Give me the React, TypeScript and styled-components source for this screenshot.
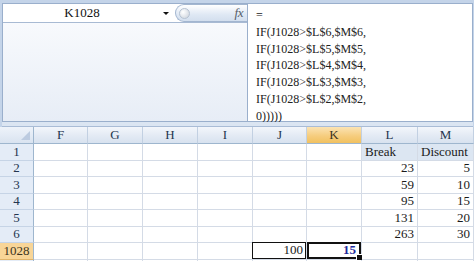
import React from "react";
import styled, { createGlobalStyle, css } from "styled-components";

const GlobalStyle = createGlobalStyle`
  html, body {
    margin: 0;
    padding: 0;
    background: #c4d4e9;
  }
  * {
    box-sizing: border-box;
  }
`;

const Window = styled.div`
  width: 474px;
  height: 261px;
  overflow: hidden;
  display: flex;
  flex-direction: column;
  padding-top: 3px;
  font-family: "Liberation Serif", serif;
`;

const FormulaBar = styled.div`
  display: flex;
  height: 119px;
  margin-left: 2px;
  margin-right: 1px;
`;

const LeftPane = styled.div`
  width: 245px;
  display: flex;
  flex-direction: column;
  border: 1px solid #9aafcc;
  border-right: none;
  background: linear-gradient(#fbfcfe, #e7edf6);
`;

const NameRow = styled.div`
  height: 19px;
  display: flex;
  align-items: stretch;
  border-bottom: 1px solid #a8bad3;
  background: #ffffff;
`;

const NameBox = styled.div`
  flex: 1;
  position: relative;
  display: flex;
  align-items: center;
  justify-content: center;
  font-family: "Liberation Serif", serif;
  font-size: 13px;
  color: #111;
  padding-right: 14px;
`;

const DropArrow = styled.span`
  position: absolute;
  right: 6px;
  top: 8px;
  width: 0;
  height: 0;
  border-left: 3px solid transparent;
  border-right: 3px solid transparent;
  border-top: 3px solid #111;
`;

const FxPill = styled.div`
  width: 72px;
  display: flex;
  align-items: center;
  justify-content: space-between;
  padding: 0 4px 0 3px;
  border: 1px solid #a3b6d0;
  border-right: none;
  border-radius: 10px 0 0 10px;
  background: linear-gradient(#ffffff, #dfe8f4 60%, #d3dfee);
`;

const Knob = styled.span`
  width: 11px;
  height: 11px;
  border-radius: 50%;
  border: 1px solid #b6c2d2;
  background: radial-gradient(circle at 35% 35%, #ffffff, #c9d0da);
`;

const FxLabel = styled.span`
  font-family: "Liberation Serif", serif;
  font-style: italic;
  font-size: 13px;
  color: #555d69;
  letter-spacing: -0.5px;
`;

const FormulaText = styled.div`
  flex: 1;
  background: #ffffff;
  border: 1px solid #9aafcc;
  padding: 3px 0 0 8px;
  font-family: "Liberation Serif", serif;
  font-size: 12px;
  line-height: 16.8px;
  color: #222;
  white-space: pre;
`;

const Strip = styled.div`
  height: 5px;
  margin: 0 1px 0 2px;
  background: #dbe5f2;
  border-bottom: 1px solid #a9bcd6;
`;

const Sheet = styled.div`
  flex: 1;
  display: grid;
  grid-template-columns: 34px 54px 55px 55px 55px 54px 55px 56px 56px;
  grid-template-rows: 17px;
  grid-auto-rows: 16.5px;
  background: #ffffff;
  overflow: hidden;
  font-family: "Liberation Serif", serif;
`;

const ColHeader = styled.div<{ $active?: boolean }>`
  display: flex;
  align-items: center;
  justify-content: center;
  font-size: 13px;
  color: ${(p) => (p.$active ? "#3c3420" : "#24364f")};
  background: ${(p) =>
    p.$active
      ? "linear-gradient(#fbe3b4, #f6cd7f 55%, #f1c15f)"
      : "linear-gradient(#f3f6fb, #e3eaf4 55%, #d8e2ef)"};
  border-right: 1px solid #c2d0e2;
  border-bottom: 1px solid #9eb6ce;
`;

const Corner = styled.div`
  position: relative;
  background: linear-gradient(#eef3fa, #d9e3f0);
  border-right: 1px solid #9eb6ce;
  border-bottom: 1px solid #9eb6ce;

  &::after {
    content: "";
    position: absolute;
    right: 3px;
    bottom: 3px;
    width: 0;
    height: 0;
    border-left: 9px solid transparent;
    border-bottom: 9px solid #bccbe0;
  }
`;

const RowHeader = styled.div<{ $active?: boolean }>`
  display: flex;
  align-items: center;
  justify-content: center;
  font-size: 13px;
  color: ${(p) => (p.$active ? "#3c3420" : "#24364f")};
  background: ${(p) => (p.$active ? "#f8d597" : "#e4ecf7")};
  border-right: 1px solid #9eb6ce;
  border-bottom: 1px solid ${(p) => (p.$active ? "#e0b46a" : "#c6d4e6")};
`;

type Mark = "plain" | "boxed" | "selected";

const Cell = styled.div<{
  $align?: "left" | "right";
  $fill?: string;
  $mark?: Mark;
  $bold?: boolean;
}>`
  position: relative;
  display: flex;
  align-items: center;
  justify-content: ${(p) => (p.$align === "right" ? "flex-end" : "flex-start")};
  padding: 0 3px;
  font-size: 13px;
  color: ${(p) => (p.$bold ? "#1c2a9c" : "#1a1a1a")};
  font-weight: ${(p) => (p.$bold ? 700 : 400)};
  background: ${(p) => p.$fill || "#ffffff"};
  border-right: 1px solid #d4dbe6;
  border-bottom: 1px solid #d4dbe6;

  ${(p) =>
    p.$mark === "boxed" &&
    css`
      box-shadow: inset 0 0 0 1px #111;
      margin: -1px 0 0 -1px;
    `}

  ${(p) =>
    p.$mark === "selected" &&
    css`
      box-shadow: inset 0 0 0 2px #111;
      margin-top: -1px;
      padding-right: 5px;

      &::after {
        content: "";
        position: absolute;
        right: -3px;
        bottom: -3px;
        width: 6px;
        height: 6px;
        background: #111;
        border: 1px solid #fff;
      }
    `}
`;

const columns = ["F", "G", "H", "I", "J", "K", "L", "M"];

interface CellData {
  value: string;
  align?: "left" | "right";
  fill?: string;
  mark?: Mark;
  bold?: boolean;
}

interface RowData {
  id: string;
  label: string;
  active?: boolean;
  cells: Record<string, CellData>;
}

const breakFill = "#dce6f2";

const num = (v: number): CellData => ({ value: String(v), align: "right" });

const rows: RowData[] = [
  {
    id: "1",
    label: "1",
    cells: {
      L: { value: "Break", fill: breakFill },
      M: { value: "Discount", fill: breakFill },
    },
  },
  { id: "2", label: "2", cells: { L: num(23), M: num(5) } },
  { id: "3", label: "3", cells: { L: num(59), M: num(10) } },
  { id: "4", label: "4", cells: { L: num(95), M: num(15) } },
  { id: "5", label: "5", cells: { L: num(131), M: num(20) } },
  { id: "6", label: "6", cells: { L: num(263), M: num(30) } },
  {
    id: "1028",
    label: "1028",
    active: true,
    cells: {
      J: { value: "100", align: "right", mark: "boxed" },
      K: { value: "15", align: "right", mark: "selected", bold: true },
    },
  },
  // next row only peeks in at the bottom edge
  { id: "1029", label: "", cells: {} },
];

const formula = [
  "=",
  "IF(J1028>$L$6,$M$6,",
  "IF(J1028>$L$5,$M$5,",
  "IF(J1028>$L$4,$M$4,",
  "IF(J1028>$L$3,$M$3,",
  "IF(J1028>$L$2,$M$2,",
  "0)))))",
].join("\n");

export default function App() {
  return (
    <>
      <GlobalStyle />
      <Window>
        <FormulaBar>
          <LeftPane>
            <NameRow>
              <NameBox>
                K1028
                <DropArrow />
              </NameBox>
              <FxPill>
                <Knob />
                <FxLabel>fx</FxLabel>
              </FxPill>
            </NameRow>
          </LeftPane>
          <FormulaText>{formula}</FormulaText>
        </FormulaBar>
        <Strip />
        <Sheet>
          <Corner />
          {columns.map((c) => (
            <ColHeader key={c} $active={c === "K"}>
              {c}
            </ColHeader>
          ))}
          {rows.map((row) => (
            <React.Fragment key={row.id}>
              <RowHeader $active={row.active}>{row.label}</RowHeader>
              {columns.map((c) => {
                const cell = row.cells[c];
                return (
                  <Cell
                    key={c}
                    $align={cell?.align}
                    $fill={cell?.fill}
                    $mark={cell?.mark}
                    $bold={cell?.bold}
                  >
                    {cell?.value}
                  </Cell>
                );
              })}
            </React.Fragment>
          ))}
        </Sheet>
      </Window>
    </>
  );
}
